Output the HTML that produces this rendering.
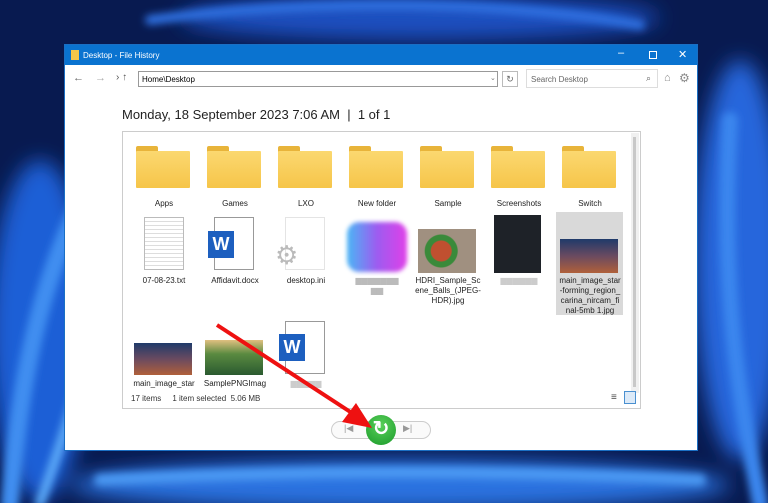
<!DOCTYPE html>
<html><head><meta charset="utf-8"><style>
*{margin:0;padding:0;box-sizing:border-box}
body{width:768px;height:503px;overflow:hidden;position:relative;font-family:"Liberation Sans",sans-serif;background:#0b1f5c}
.abs{position:absolute}
.win{left:64px;top:44px;width:634px;height:407px;background:#fff;border:1px solid #1a6fc4}
.title{left:0;top:0;width:632px;height:20px;background:#0a73d0;color:#fff;font-size:8px}
.lbl{position:absolute;font-size:8px;color:#222;text-align:center;width:70px;line-height:10px}
.folder{position:absolute;width:54px;height:42px}
.folder:before{content:"";position:absolute;left:0;top:0;width:22px;height:8px;background:#e8b43a;border-radius:2px 2px 0 0}
.folder:after{content:"";position:absolute;left:0;top:5px;width:54px;height:37px;background:linear-gradient(#fbd870,#f6c549);border-radius:1px}
.doc{position:absolute;background:#fff;border:1px solid #bbb}
</style></head><body>
<svg class="abs" style="left:0;top:0" width="768" height="503">
<defs><filter id="b"><feGaussianBlur stdDeviation="10"/></filter><filter id="c"><feGaussianBlur stdDeviation="4"/></filter></defs>
<rect width="768" height="503" fill="#081a50"/>
<g filter="url(#b)">
<ellipse cx="40" cy="330" rx="50" ry="170" fill="#1f5fd6"/>
<ellipse cx="740" cy="260" rx="45" ry="200" fill="#2566dc"/>
<ellipse cx="400" cy="485" rx="330" ry="25" fill="#2a72e0"/>
<ellipse cx="420" cy="18" rx="240" ry="22" fill="#1a50c0"/>
</g>
<g filter="url(#c)" fill="none" stroke-linecap="round">
<path d="M10 503 C20 380 40 260 110 150" stroke="#3f8ef0" stroke-width="18"/>
<path d="M40 503 C70 420 90 350 100 300" stroke="#5aa8f8" stroke-width="10"/>
<path d="M760 503 C740 400 720 300 730 120" stroke="#3a86ee" stroke-width="16"/>
<path d="M150 20 C300 0 500 0 640 25" stroke="#2f6fe0" stroke-width="10"/>
<path d="M100 480 C300 470 500 470 700 480" stroke="#4b9af4" stroke-width="12"/>
</g></svg>
<div class="abs win">
 <div class="abs title">
  <div class="abs" style="left:6px;top:5px;width:8px;height:10px;background:#f5c84a"></div>
  <div class="abs" style="left:18px;top:6px">Desktop - File History</div>
  <div class="abs" style="left:553px;top:2px;font-size:11px">–</div>
  <div class="abs" style="left:584px;top:6px;width:8px;height:8px;border:1px solid #fff"></div>
  <div class="abs" style="left:613px;top:3px;font-size:11px">✕</div>
 </div>
 <div class="abs" style="left:8px;top:27px;font-size:11px;color:#666">←</div>
 <div class="abs" style="left:30px;top:27px;font-size:11px;color:#aaa">→</div>
 <div class="abs" style="left:51px;top:27px;font-size:10px;color:#555">› ↑</div>
 <div class="abs" style="left:73px;top:26px;width:360px;height:16px;border:1px solid #999;font-size:8px;padding:3px 3px">Home\Desktop</div>
 <div class="abs" style="left:425px;top:29px;font-size:7px;color:#777">⌄</div>
 <div class="abs" style="left:437px;top:26px;width:16px;height:16px;border:1px solid #bbb;font-size:9px;color:#666;text-align:center;line-height:14px">↻</div>
 <div class="abs" style="left:461px;top:24px;width:132px;height:19px;border:1px solid #ddd;font-size:8px;color:#666;padding:5px 4px">Search Desktop<span style="position:absolute;right:6px;top:3px;font-size:9px">⌕</span></div>
 <div class="abs" style="left:599px;top:27px;font-size:11px;color:#888">⌂</div>
 <div class="abs" style="left:614px;top:26px;font-size:12px;color:#888">⚙</div>
 <div class="abs" style="left:57px;top:62px;font-size:13px;color:#222">Monday, 18 September 2023 7:06 AM &nbsp;| &nbsp;1 of 1</div>
 <div class="abs" style="left:57px;top:86px;width:519px;height:278px;border:1px solid #ccc;background:#fff"></div>
 <div class="abs" style="left:566px;top:88px;width:8px;height:260px;background:#f0f0f0"><div style="margin:4px 2px;width:3px;height:250px;background:#c8c8c8"></div></div>
</div>
<div class="folder" style="left:136px;top:146px"></div>
<div class="folder" style="left:207px;top:146px"></div>
<div class="folder" style="left:278px;top:146px"></div>
<div class="folder" style="left:349px;top:146px"></div>
<div class="folder" style="left:420px;top:146px"></div>
<div class="folder" style="left:491px;top:146px"></div>
<div class="folder" style="left:562px;top:146px"></div>
<div class="lbl" style="left:129px;top:199px">Apps</div>
<div class="lbl" style="left:200px;top:199px">Games</div>
<div class="lbl" style="left:271px;top:199px">LXO</div>
<div class="lbl" style="left:342px;top:199px">New folder</div>
<div class="lbl" style="left:413px;top:199px">Sample</div>
<div class="lbl" style="left:484px;top:199px">Screenshots</div>
<div class="lbl" style="left:555px;top:199px">Switch</div>
<div class="abs" style="left:556px;top:212px;width:67px;height:103px;background:#d9d9d9"></div>
<div class="doc" style="left:144px;top:217px;width:40px;height:53px;background:repeating-linear-gradient(#fff 0 3px,#ddd 3px 4px)"></div>
<div class="doc" style="left:214px;top:217px;width:40px;height:53px;border-color:#999"></div>
<div class="abs" style="left:208px;top:231px;width:26px;height:27px;background:#1d5fbf;color:#fff;font-weight:bold;font-size:18px;text-align:center;line-height:27px">W</div>
<div class="doc" style="left:285px;top:217px;width:40px;height:53px;border-color:#e4e4e4"></div>
<div class="abs" style="left:275px;top:240px;font-size:26px;color:#bbb">⚙</div>
<div class="abs" style="left:347px;top:222px;width:60px;height:50px;border-radius:12px;background:linear-gradient(90deg,#4ab6f5,#9d5cf0,#e040e8);filter:blur(2px)"></div>
<div class="abs" style="left:418px;top:229px;width:58px;height:44px;background:radial-gradient(circle at 40% 50%,#c05030 0 10px,#3a8a3a 11px 16px,#a09080 17px)"></div>
<div class="abs" style="left:494px;top:215px;width:47px;height:58px;background:#1e2228"></div>
<div class="abs" style="left:560px;top:239px;width:58px;height:34px;background:linear-gradient(#1f3a6a,#6a4a60 50%,#b0603a)"></div>
<div class="lbl" style="left:129px;top:276px">07-08-23.txt</div>
<div class="lbl" style="left:200px;top:276px">Affidavit.docx</div>
<div class="lbl" style="left:271px;top:276px">desktop.ini</div>
<div class="lbl" style="left:342px;top:276px;color:#bbb">▆▆▆▆▆▆▆<br>▆▆</div>
<div class="lbl" style="left:413px;top:276px">HDRI_Sample_Sc<br>ene_Balls_(JPEG-<br>HDR).jpg</div>
<div class="lbl" style="left:484px;top:276px;color:#ccc">▆▆▆▆▆▆</div>
<div class="lbl" style="left:555px;top:276px">main_image_star<br>-forming_region_<br>carina_nircam_fi<br>nal-5mb 1.jpg</div>
<div class="abs" style="left:134px;top:343px;width:58px;height:32px;background:linear-gradient(#1f3a6a,#6a4a60 50%,#b0603a)"></div>
<div class="abs" style="left:205px;top:340px;width:58px;height:35px;background:linear-gradient(#e0c080,#5a8a40 40%,#2a5a30)"></div>
<div class="doc" style="left:285px;top:321px;width:40px;height:53px;border-color:#999"></div>
<div class="abs" style="left:279px;top:334px;width:26px;height:27px;background:#1d5fbf;color:#fff;font-weight:bold;font-size:18px;text-align:center;line-height:27px">W</div>
<div class="lbl" style="left:129px;top:379px;height:10px;overflow:hidden">main_image_star</div>
<div class="lbl" style="left:200px;top:379px;height:10px;overflow:hidden">SamplePNGImag</div>
<div class="lbl" style="left:271px;top:379px;color:#ccc">▆▆▆▆▆</div>
<div class="abs" style="left:131px;top:394px;font-size:8px;color:#333">17 items &nbsp;&nbsp;&nbsp; 1 item selected &nbsp;5.06 MB</div>
<div class="abs" style="left:611px;top:392px;font-size:10px;color:#444">≡</div>
<div class="abs" style="left:624px;top:391px;width:12px;height:13px;border:1px solid #4a90d0;background:#dceaf8"></div>
<div class="abs" style="left:331px;top:421px;width:100px;height:18px;border:1px solid #ccc;border-radius:9px;background:#fafafa"></div>
<div class="abs" style="left:344px;top:423px;font-size:9px;color:#999">|◀</div>
<div class="abs" style="left:403px;top:423px;font-size:9px;color:#999">▶|</div>
<div class="abs" style="left:366px;top:415px;width:30px;height:30px;border-radius:50%;background:radial-gradient(circle at 50% 35%,#5ad05a,#1a9a2a);color:#fff;font-size:20px;text-align:center;line-height:29px;font-weight:bold">↻</div>
<svg class="abs" style="left:0;top:0" width="768" height="503">
<line x1="217" y1="325" x2="355" y2="415" stroke="#e11" stroke-width="4"/>
<polygon points="372,428 342,422 356,403" fill="#e11"/>
</svg>
</body></html>
